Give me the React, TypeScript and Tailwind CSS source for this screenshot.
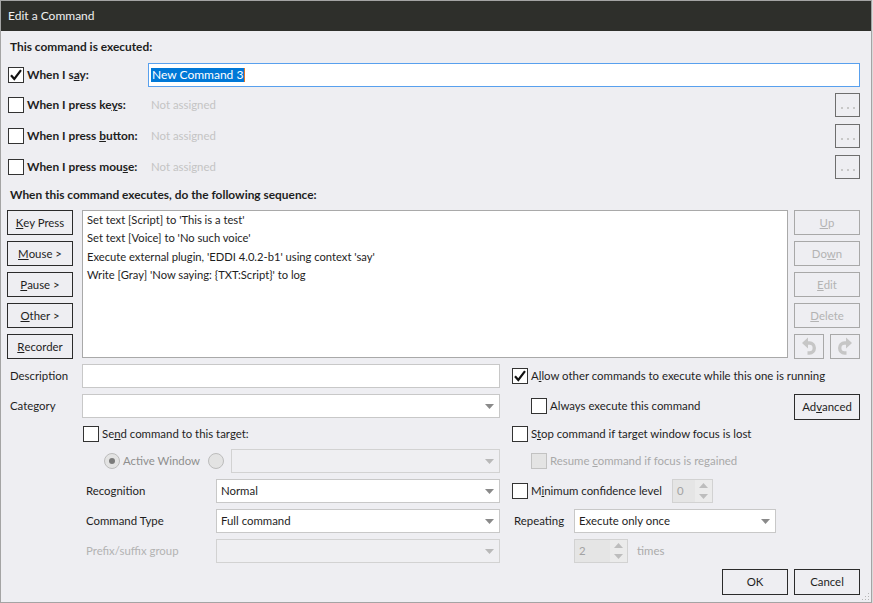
import React from "react";

const Check = () => (
  <svg width="14" height="14" viewBox="0 0 14 14" className="block">
    <path d="M2 7.2 L5.3 11 L12 2.2" stroke="#111" strokeWidth="2.2" fill="none" />
  </svg>
);

function CheckBox({ checked = false, disabled = false }: { checked?: boolean; disabled?: boolean }) {
  return (
    <div
      className={
        "w-[16px] h-[16px] shrink-0 border flex items-center justify-center " +
        (disabled ? "border-[#c2c2c2] bg-[#e4e4e4]" : "border-[#333333] bg-white")
      }
    >
      {checked ? <Check /> : null}
    </div>
  );
}

function Radio({ dot = false }: { dot?: boolean }) {
  return (
    <div className="w-[16px] h-[16px] shrink-0 rounded-full border border-[#bcbcbc] bg-[#e3e3e3] flex items-center justify-center">
      {dot ? <div className="w-[6px] h-[6px] rounded-full bg-[#7a7a7a]" /> : null}
    </div>
  );
}

function Btn({
  children,
  disabled = false,
  className = "",
}: {
  children: React.ReactNode;
  disabled?: boolean;
  className?: string;
}) {
  return (
    <div
      className={
        "h-[25px] w-[66px] shrink-0 border flex items-center justify-center " +
        (disabled ? "border-[#a8a8a8] text-[#b3b3b3] " : "border-[#2b2b2b] text-[#1e1e1e] ") +
        className
      }
    >
      {children}
    </div>
  );
}

const Arrow = ({ color = "#8c8c8c" }: { color?: string }) => (
  <svg width="9" height="5" viewBox="0 0 9 5" className="block">
    <path d="M0 0 H9 L4.5 5 Z" fill={color} />
  </svg>
);

function Combo({
  value = "",
  disabled = false,
  className = "",
}: {
  value?: string;
  disabled?: boolean;
  className?: string;
}) {
  return (
    <div
      className={
        "h-[24px] border flex items-center pl-[4px] pr-[5px] " +
        (disabled ? "border-[#d2d2d2] bg-[#efeff2] " : "border-[#c8c8c8] bg-white ") +
        className
      }
    >
      <span className="flex-1 text-[#1e1e1e]">{value}</span>
      <Arrow color={disabled ? "#b9b9b9" : "#8a8a8a"} />
    </div>
  );
}

function Spinner({ value, className = "" }: { value: string; className?: string }) {
  return (
    <div className={"h-[24px] border border-[#d2d2d2] bg-[#e5e5e5] flex " + className}>
      <span className="flex-1 pl-[4px] flex items-center text-[#a3a3a3]">{value}</span>
      <div className="w-[17px] flex flex-col items-center justify-center gap-[6px] bg-[#ebebeb]">
        <svg width="9" height="5" viewBox="0 0 9 5" className="block">
          <path d="M0 5 H9 L4.5 0 Z" fill="#bdbdbd" />
        </svg>
        <svg width="9" height="5" viewBox="0 0 9 5" className="block">
          <path d="M0 0 H9 L4.5 5 Z" fill="#bdbdbd" />
        </svg>
      </div>
    </div>
  );
}

const DotsBtn = () => (
  <div className="ml-auto w-[25px] h-[24px] border border-[#6e6e6e] flex items-end justify-center pb-[7px] gap-[4px]">
    <div className="w-[2px] h-[2px] bg-[#c8c8c8]" />
    <div className="w-[2px] h-[2px] bg-[#c8c8c8]" />
    <div className="w-[2px] h-[2px] bg-[#c8c8c8]" />
  </div>
);

const U = ({ children }: { children: React.ReactNode }) => (
  <span className="underline underline-offset-[1px] decoration-1">{children}</span>
);

const UndoIcon = ({ flip = false }: { flip?: boolean }) => (
  <svg width="16" height="19" viewBox="0 0 16 19" className={"block " + (flip ? "-scale-x-100" : "")}>
    <path d="M1 6 L7 0.5 L7 11.5 Z" fill="#c6c6c6" />
    <path d="M6.5 6 H8.5 A4.8 5 0 0 1 8.5 16 H6.5" stroke="#c6c6c6" strokeWidth="3.4" fill="none" />
  </svg>
);

export default function App() {
  return (
    <div className="w-[873px] h-[603px] bg-[#dadada] font-['Lato','Noto_Sans',sans-serif] text-[11.4px] text-[#1e1e1e] leading-none">
      <div className="relative w-[872px] h-[603px] border border-[#a4a4a4] bg-[#eeeef2] flex flex-col">
        <div className="h-[30px] shrink-0 bg-[#2e2f2b] flex items-center pl-[7px] text-[#f0f0f0] text-[12px]">
          Edit a Command
        </div>
        <div className="flex flex-col pl-[6px] pr-[11px]">
          <div className="mt-[7px] h-[18px] flex items-center pl-[3px] font-bold text-[11.9px]">This command is executed:</div>

          <div className="mt-[7px] h-[24px] flex items-center">
            <div className="ml-[1px]">
              <CheckBox checked />
            </div>
            <span className="ml-[3px] w-[121px] font-bold text-[11.9px]">
              When I s<U>a</U>y:
            </span>
            <div className="flex-1 h-[24px] border border-[#58a0ee] bg-white flex items-center pl-[2px]">
              <span className="bg-[#0078d7] text-white px-[1px] py-[1px] text-[12px] leading-[12px]">New Command 3</span>
              <span className="w-[1px] h-[14px] bg-[#e0742a]" />
            </div>
          </div>

          <div className="mt-[6px] h-[24px] flex items-center">
            <div className="ml-[1px]">
              <CheckBox />
            </div>
            <span className="ml-[3px] w-[121px] font-bold text-[11.9px]">
              When I press ke<U>y</U>s:
            </span>
            <span className="pl-[3px] text-[#c4c4c4]">Not assigned</span>
            <DotsBtn />
          </div>

          <div className="mt-[7px] h-[24px] flex items-center">
            <div className="ml-[1px]">
              <CheckBox />
            </div>
            <span className="ml-[3px] w-[121px] font-bold text-[11.9px]">
              When I press <U>b</U>utton:
            </span>
            <span className="pl-[3px] text-[#c4c4c4]">Not assigned</span>
            <DotsBtn />
          </div>

          <div className="mt-[7px] h-[24px] flex items-center">
            <div className="ml-[1px]">
              <CheckBox />
            </div>
            <span className="ml-[3px] w-[121px] font-bold text-[11.9px]">
              When I press mou<U>s</U>e:
            </span>
            <span className="pl-[3px] text-[#c4c4c4]">Not assigned</span>
            <DotsBtn />
          </div>

          <div className="mt-[7px] h-[18px] flex items-center pl-[3px] font-bold text-[11.9px]">
            When this command executes, do the following sequence:
          </div>

          <div className="mt-[6px] h-[148px] flex">
            <div className="w-[66px] flex flex-col gap-[6px]">
              <Btn>
                <U>K</U>ey Press
              </Btn>
              <Btn>
                <U>M</U>ouse &gt;
              </Btn>
              <Btn>
                <U>P</U>ause &gt;
              </Btn>
              <Btn>
                <U>O</U>ther &gt;
              </Btn>
              <Btn>
                <U>R</U>ecorder
              </Btn>
            </div>
            <div className="ml-[9px] flex-1 h-[148px] border border-[#a9a9a9] bg-white pl-[4px] leading-[18.3px] text-[11.2px]">
              <div>Set text [Script] to 'This is a test'</div>
              <div>Set text [Voice] to 'No such voice'</div>
              <div>Execute external plugin, 'EDDI 4.0.2-b1' using context 'say'</div>
              <div>Write [Gray] 'Now saying: {"{TXT:Script}"}' to log</div>
            </div>
            <div className="ml-[6px] w-[66px] flex flex-col gap-[6px]">
              <Btn disabled>
                <U>U</U>p
              </Btn>
              <Btn disabled>
                Do<U>w</U>n
              </Btn>
              <Btn disabled>
                <U>E</U>dit
              </Btn>
              <Btn disabled>
                <U>D</U>elete
              </Btn>
              <div className="flex gap-[6px]">
                <div className="w-[30px] h-[25px] border border-[#a8a8a8] flex items-center justify-center">
                  <UndoIcon />
                </div>
                <div className="w-[30px] h-[25px] border border-[#a8a8a8] flex items-center justify-center">
                  <UndoIcon flip />
                </div>
              </div>
            </div>
          </div>

          {/* Row 1 */}
          <div className="mt-[6px] h-[24px] flex">
            <div className="w-[493px] flex items-center">
              <span className="w-[75px] pl-[3px]">Description</span>
              <div className="flex-1 h-[24px] border border-[#c8c8c8] bg-white" />
            </div>
            <div className="ml-[12px] flex-1 flex items-center">
              <CheckBox checked />
              <span className="ml-[3px]">
                A<U>l</U>low other commands to execute while this one is running
              </span>
            </div>
          </div>

          {/* Row 2 */}
          <div className="mt-[6px] h-[24px] flex">
            <div className="w-[493px] flex items-center">
              <span className="w-[75px] pl-[3px]">Category</span>
              <Combo className="flex-1" />
            </div>
            <div className="ml-[12px] flex-1 flex items-center pl-[19px]">
              <CheckBox />
              <span className="ml-[3px]">Always execute this command</span>
              <div className="ml-auto">
                <Btn className="h-[26px] mt-[1px]">
                  Ad<U>v</U>anced
                </Btn>
              </div>
            </div>
          </div>

          {/* Row 3 */}
          <div className="mt-[4px] h-[24px] flex">
            <div className="w-[493px] flex items-center pl-[76px]">
              <CheckBox />
              <span className="ml-[3px]">
                Se<U>n</U>d command to this target:
              </span>
            </div>
            <div className="ml-[12px] flex-1 flex items-center">
              <CheckBox />
              <span className="ml-[3px]">
                S<U>t</U>op command if target window focus is lost
              </span>
            </div>
          </div>

          {/* Row 4 */}
          <div className="mt-[3px] h-[24px] flex">
            <div className="w-[493px] flex items-center pl-[97px]">
              <Radio dot />
              <span className="ml-[3px] w-[85px] text-[#8e8e8e]">Active Window</span>
              <Radio />
              <Combo disabled className="ml-[7px] flex-1" />
            </div>
            <div className="ml-[12px] flex-1 flex items-center pl-[19px]">
              <CheckBox disabled />
              <span className="ml-[3px] text-[#a9a9a9]">
                Resume <U>c</U>ommand if focus is regained
              </span>
            </div>
          </div>

          {/* Row 5 */}
          <div className="mt-[6px] h-[24px] flex">
            <div className="w-[493px] flex items-center pl-[79px]">
              <span className="w-[130px]">Recognition</span>
              <Combo value="Normal" className="flex-1" />
            </div>
            <div className="ml-[12px] flex-1 flex items-center">
              <CheckBox />
              <span className="ml-[3px] w-[141px]">
                M<U>i</U>nimum confidence level
              </span>
              <Spinner value="0" className="w-[41px]" />
            </div>
          </div>

          {/* Row 6 */}
          <div className="mt-[6px] h-[24px] flex">
            <div className="w-[493px] flex items-center pl-[79px]">
              <span className="w-[130px]">Command Type</span>
              <Combo value="Full command" className="flex-1" />
            </div>
            <div className="ml-[12px] flex-1 flex items-center">
              <span className="w-[62px] pl-[2px]">Repeating</span>
              <Combo value="Execute only once" className="w-[202px]" />
            </div>
          </div>

          {/* Row 7 */}
          <div className="mt-[6px] h-[24px] flex">
            <div className="w-[493px] flex items-center pl-[79px]">
              <span className="w-[130px] text-[#b3b3b3]">Prefix/suffix group</span>
              <Combo disabled className="flex-1" />
            </div>
            <div className="ml-[12px] flex-1 flex items-center pl-[62px]">
              <Spinner value="2" className="w-[54px]" />
              <span className="ml-[9px] text-[#ababab]">times</span>
            </div>
          </div>

          {/* Row 8 */}
          <div className="mt-[6px] flex justify-end gap-[6px]">
            <Btn className="h-[26px]">OK</Btn>
            <Btn className="h-[26px]">Cancel</Btn>
          </div>
        </div>
        <svg width="8" height="8" viewBox="0 0 8 8" className="absolute right-[1px] bottom-[1px]">
          <rect x="6" y="0" width="1" height="1" fill="#b5b5b5" />
          <rect x="3" y="3" width="1" height="1" fill="#b5b5b5" />
          <rect x="6" y="3" width="1" height="1" fill="#b5b5b5" />
          <rect x="0" y="6" width="1" height="1" fill="#b5b5b5" />
          <rect x="3" y="6" width="1" height="1" fill="#b5b5b5" />
          <rect x="6" y="6" width="1" height="1" fill="#b5b5b5" />
        </svg>
      </div>
    </div>
  );
}
